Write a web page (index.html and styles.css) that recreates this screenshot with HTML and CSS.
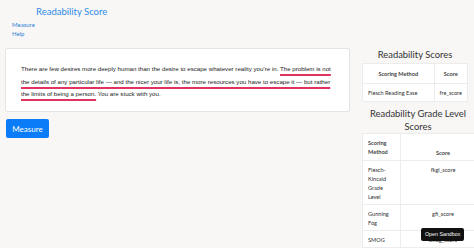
FILE: index.html
```html
<!DOCTYPE html>
<html>
<head>
<meta charset="utf-8">
<link rel="stylesheet" href="styles.css">
</head>
<body>
<header class="header">
  <div class="brand">Readability Score</div>
  <nav class="nav">
    <a class="nav-link" href="#">Measure</a>
    <a class="nav-link" href="#">Help</a>
  </nav>
</header>
<main class="main">
  <section class="left">
    <div class="textbox">
      <p class="passage">There are few desires more deeply human than the desire to escape whatever reality you’re in. <span class="flag">The problem is not the details of any particular life — and the nicer your life is, the more resources you have to escape it — but rather the limits of being a person.</span> You are stuck with you.</p>
    </div>
    <button class="btn">Measure</button>
  </section>
  <aside class="right">
    <h2 class="heading">Readability Scores</h2>
    <table class="scores scores-1">
      <thead>
        <tr><th class="c-method">Scoring Method</th><th class="c-score">Score</th></tr>
      </thead>
      <tbody>
        <tr><td>Flesch Reading Ease</td><td class="center">fre_score</td></tr>
      </tbody>
    </table>
    <h2 class="heading heading-2">Readability Grade Level Scores</h2>
    <table class="scores scores-2">
      <thead>
        <tr><th class="c-method2">Scoring Method</th><th class="c-score2 bottom">Score</th></tr>
      </thead>
      <tbody>
        <tr><td>Flesch-Kincaid Grade Level</td><td class="center">fkgl_score</td></tr>
        <tr><td>Gunning Fog</td><td class="center">gfi_score</td></tr>
        <tr><td>SMOG</td><td class="center">smog_score</td></tr>
      </tbody>
    </table>
  </aside>
</main>
<div class="tooltip">Open Sandbox</div>
</body>
</html>
```

FILE: styles.css
```css
html, body {
  margin: 0;
  padding: 0;
  background: #f8f7f5;
  overflow: hidden;
  height: 248px;
}
body {
  font-family: Lato, "Noto Sans", sans-serif;
  color: #333;
}
.header {
  padding: 6px 0 0 12px;
  height: 42px;
  box-sizing: border-box;
}
.brand {
  margin-left: 24px;
  font-size: 9.5px;
  line-height: 12px;
  color: #2f8ce8;
}
.nav {
  display: flex;
  flex-direction: column;
  margin-top: 3px;
}
.nav-link {
  font-size: 6px;
  line-height: 8.5px;
  color: #2f7fd8;
  text-decoration: none;
}
.main {
  display: flex;
  align-items: flex-start;
  padding-top: 6px;
}
.left {
  margin-left: 5px;
  width: 345px;
  flex: none;
}
.textbox {
  background: #fff;
  border: 1px solid #e4e4e4;
  border-radius: 2px;
  height: 64px;
  box-sizing: border-box;
  padding: 14px 18px 14px 15px;
}
.passage {
  margin: 0;
  font-family: "Liberation Sans", Arial, sans-serif;
  font-size: 6.15px;
  line-height: 12.6px;
  color: #222;
}
.flag {
  text-decoration: underline;
  text-decoration-color: #e0335f;
  text-decoration-thickness: 1.5px;
  text-underline-offset: 3px;
}
.btn {
  margin-top: 7px;
  margin-left: 1px;
  background: #0a7cf8;
  color: #fff;
  border: none;
  border-radius: 2px;
  font-family: Lato, sans-serif;
  font-size: 8px;
  width: 43px;
  height: 19px;
  padding: 0;
}
.right {
  margin-left: 12px;
  width: 112px;
  flex: none;
}
.heading {
  margin: 0;
  font-weight: 400;
  font-size: 9.4px;
  line-height: 13px;
  text-align: center;
  color: #333;
  width: 106px;
}
.heading-2 {
  width: 112px;
  margin-top: 5px;
}
.scores {
  border-collapse: collapse;
  background: #fff;
  font-size: 5.6px;
  color: #333;
}
.scores th {
  font-weight: 700;
  color: #444;
}
.scores th, .scores td {
  border: 1px solid #ececec;
  padding: 0 5px;
}
.scores-1 {
  margin-top: 2px;
  width: 106px;
}
.scores-1 th { height: 19px; }
.scores-1 td { height: 17px; }
.c-method { width: 62px; }
.center { text-align: center; }
.scores-2 {
  margin-top: 0;
  width: 124px;
  line-height: 9px;
}
.scores-2 th { height: 23px; text-align: left; }
.scores-2 th.bottom { vertical-align: bottom; text-align: center; padding-bottom: 3px; }
.c-method2 { width: 27px; }
.scores-2 td { vertical-align: top; padding-top: 3.5px; padding-bottom: 3.5px; }
.tooltip {
  position: absolute;
  left: 421px;
  top: 228px;
  background: #111;
  color: #fff;
  font-family: "Liberation Sans", Arial, sans-serif;
  font-size: 5.3px;
  line-height: 13px;
  padding: 0 4px;
  border-radius: 2px;
}
```
